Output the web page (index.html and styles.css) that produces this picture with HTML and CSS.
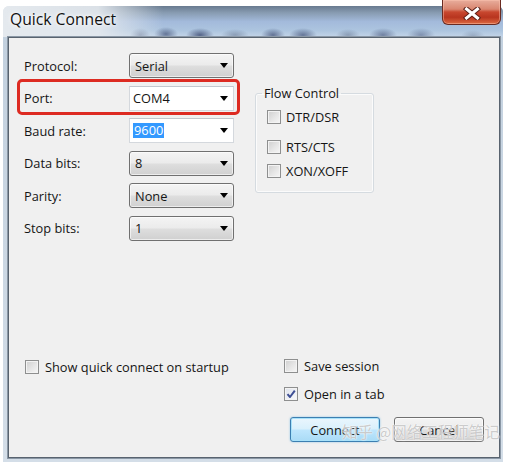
FILE: index.html
```html
<!DOCTYPE html>
<html>
<head>
<meta charset="utf-8">
<title>Quick Connect</title>
<link rel="stylesheet" href="styles.css">
</head>
<body>
<div class="window">
  <div class="titlebar">
    <span class="title">Quick Connect</span>
    <div class="close">
      <svg width="18" height="13" viewBox="0 0 18 13">
        <path d="M3.5 2 L14.5 11 M14.5 2 L3.5 11" stroke="#5b1f16" stroke-width="5" stroke-linecap="square" fill="none"/>
        <path d="M3.5 2 L14.5 11 M14.5 2 L3.5 11" stroke="#ffffff" stroke-width="3" stroke-linecap="square" fill="none"/>
      </svg>
    </div>
  </div>
  <div class="frame">
    <div class="panel">
      <div class="top">
        <div class="form">
          <div class="row">
            <span class="label">Protocol:</span>
            <div class="combo btn"><span>Serial</span><i class="arrow"></i></div>
          </div>
          <div class="row hl">
            <span class="label">Port:</span>
            <div class="combo edit"><span>COM4</span><i class="arrow"></i></div>
          </div>
          <div class="row">
            <span class="label">Baud rate:</span>
            <div class="combo edit"><span class="sel">9600</span><i class="arrow"></i></div>
          </div>
          <div class="row">
            <span class="label">Data bits:</span>
            <div class="combo btn"><span>8</span><i class="arrow"></i></div>
          </div>
          <div class="row">
            <span class="label">Parity:</span>
            <div class="combo btn"><span>None</span><i class="arrow"></i></div>
          </div>
          <div class="row">
            <span class="label">Stop bits:</span>
            <div class="combo btn"><span>1</span><i class="arrow"></i></div>
          </div>
        </div>
        <fieldset class="group">
          <legend>Flow Control</legend>
          <div class="check g1"><span class="box"></span><span>DTR/DSR</span></div>
          <div class="check g2"><span class="box"></span><span>RTS/CTS</span></div>
          <div class="check g3"><span class="box"></span><span>XON/XOFF</span></div>
        </fieldset>
      </div>
      <div class="bottom">
        <div class="left">
          <div class="check"><span class="box"></span><span>Show quick connect on startup</span></div>
        </div>
        <div class="right">
          <div class="check"><span class="box"></span><span>Save session</span></div>
          <div class="check"><span class="box checked">
            <svg width="12" height="12" viewBox="0 0 12 12"><path d="M2.5 6.2 L5 9 L9.8 2.6" stroke="#3e4f94" stroke-width="2" fill="none" stroke-linejoin="round"/></svg>
          </span><span>Open in a tab</span></div>
          <div class="buttons">
            <div class="button default">Connect</div>
            <div class="button">Cancel</div>
          </div>
        </div>
      </div>
      <div class="watermark">知乎 @网络工程师笔记</div>
    </div>
  </div>
</div>
</body>
</html>
```
FILE: styles.css
```css
* { box-sizing: border-box; }
html, body { margin: 0; padding: 0; background: #ffffff; }
body {
  font-family: "Open Sans", "Noto Sans", sans-serif;
  font-size: 12.8px;
  color: #151515;
}

.window {
  margin: 6px 0 0 3px;
  width: 500px;
  height: 456px;
  display: flex;
  flex-direction: column;
  border-radius: 6px 6px 0 0;
  background: linear-gradient(to right, #e3e9ee 0, #cdd8e3 40%, #c3d1df 100%);
}

.titlebar {
  height: 31px;
  flex: none;
  display: flex;
  align-items: flex-start;
  border-radius: 6px 6px 0 0;
  background:
    linear-gradient(to right, rgba(228,233,238,1) 0, rgba(228,233,238,.92) 95px, rgba(228,233,238,0) 160px),
    radial-gradient(ellipse 10px 7px at 137px 29px, rgba(60,74,110,.45), rgba(60,74,110,0)),
    radial-gradient(ellipse 12px 7px at 163px 28px, rgba(55,70,110,.65), rgba(55,70,110,0)),
    radial-gradient(ellipse 14px 7px at 197px 29px, rgba(50,64,105,.75), rgba(50,64,105,0)),
    radial-gradient(ellipse 14px 6px at 232px 29px, rgba(80,96,125,.45), rgba(80,96,125,0)),
    radial-gradient(ellipse 12px 7px at 270px 29px, rgba(50,64,105,.65), rgba(50,64,105,0)),
    radial-gradient(ellipse 14px 7px at 300px 29px, rgba(55,70,110,.65), rgba(55,70,110,0)),
    radial-gradient(ellipse 12px 6px at 345px 29px, rgba(80,96,125,.45), rgba(80,96,125,0)),
    radial-gradient(ellipse 14px 7px at 380px 29px, rgba(50,64,105,.55), rgba(50,64,105,0)),
    radial-gradient(ellipse 14px 7px at 418px 29px, rgba(55,70,110,.45), rgba(55,70,110,0)),
    radial-gradient(ellipse 12px 6px at 470px 30px, rgba(80,96,125,.35), rgba(80,96,125,0)),
    linear-gradient(to bottom, #687a8f 0%, #889cb2 22%, #a3badb 50%, #adc5df 80%, #c4d5e8 100%);
}

.title {
  padding: 2px 0 0 7px;
  font-size: 15.7px;
  color: #111;
  text-shadow: 0 0 6px #ffffff, 0 0 3px #ffffff;
}

.close {
  margin: -6px 2px 0 auto;
  width: 59px;
  height: 25px;
  display: flex;
  align-items: center;
  justify-content: center;
  padding-top: 2px;
  border: 1px solid #6a2b22;
  border-top: none;
  border-radius: 0 0 6px 6px;
  background: linear-gradient(to bottom, #e8ad9c 0%, #d98670 38%, #c8472f 50%, #b8351f 72%, #dd6a42 100%);
  box-shadow: inset 0 0 0 1px rgba(255,200,180,.45);
}

.frame {
  flex: 1;
  display: flex;
  padding: 0 3px 4px 5px;
  background: linear-gradient(to bottom, #c3d1df, #d4dee8);
}

.panel {
  flex: 1;
  position: relative;
  display: flex;
  flex-direction: column;
  background: #f0f0f0;
  border: 1px solid #58636f;
  box-shadow: 0 0 0 1px #8a97a5;
}

.top {
  display: flex;
  align-items: flex-start;
  padding: 15px 0 0 15px;
}

.form {
  display: flex;
  flex-direction: column;
  gap: 7.5px;
}

.row {
  display: flex;
  align-items: center;
  height: 25px;
  position: relative;
}

.label {
  width: 105px;
  color: #151515;
}

.row.hl::after {
  content: "";
  position: absolute;
  left: -7px;
  right: -6px;
  top: -7px;
  bottom: -4px;
  border: 3px solid #dd2b22;
  border-radius: 5px;
}

.combo {
  width: 105px;
  height: 25px;
  display: flex;
  align-items: center;
  padding-left: 5px;
}

.combo.btn {
  border: 1px solid #707070;
  border-radius: 3px;
  background: linear-gradient(to bottom, #f4f4f4 0%, #ebebeb 48%, #dedede 52%, #d0d0d0 100%);
  box-shadow: inset 0 0 0 1px rgba(255,255,255,.6);
}

.combo.edit {
  background: #ffffff;
  border: 1px solid #d4d8dd;
  border-top-color: #c2c7ce;
  padding-left: 3px;
}

.sel {
  background: #3399ff;
  color: #ffffff;
  padding: 0 1px;
  line-height: 15px;
}

.arrow {
  margin-left: auto;
  margin-right: 5px;
  width: 0;
  height: 0;
  border-left: 4px solid transparent;
  border-right: 4px solid transparent;
  border-top: 5px solid #000;
}

.group {
  margin: 32px 0 0 21px;
  width: 119px;
  padding: 0 0 13px 11px;
  border: 1px solid #d5dbe0;
  border-radius: 3px;
  box-shadow: inset 0 0 0 1px #fbfbfb;
}

.group legend {
  margin-left: -5px;
  padding: 0 2px;
  line-height: 17px;
  color: #151515;
}

.check {
  display: flex;
  align-items: center;
  height: 16px;
  gap: 6px;
}

.g1 { margin-top: 7px; gap: 5px; }
.g2 { margin-top: 14px; gap: 5px; }
.g3 { margin-top: 8px; gap: 5px; }

.box {
  width: 14px;
  height: 14px;
  flex: none;
  display: flex;
  align-items: center;
  justify-content: center;
  border: 1px solid #8e8f8f;
  background: linear-gradient(135deg, #cfcfcf 0%, #e6e6e6 55%, #f6f6f6 100%);
  box-shadow: inset 0 0 0 1px #f3f3f3;
}

.box.checked {
  background: linear-gradient(135deg, #dfe3ec 0%, #eef0f5 60%, #fafafa 100%);
}

.bottom {
  margin-top: auto;
  display: flex;
  padding: 0 0 15px 16px;
}

.bottom .left {
  width: 259px;
  padding-top: 1px;
}

.bottom .right {
  display: flex;
  flex-direction: column;
  gap: 12px;
}

.buttons {
  display: flex;
  gap: 14px;
  margin: 3px 0 0 6px;
}

.button {
  width: 90px;
  height: 25px;
  display: flex;
  align-items: center;
  justify-content: center;
  border: 1px solid #707070;
  border-radius: 3px;
  background: linear-gradient(to bottom, #f4f4f4 0%, #ebebeb 48%, #dedede 52%, #d0d0d0 100%);
  box-shadow: inset 0 0 0 1px rgba(255,255,255,.7);
  color: #151515;
}

.button.default {
  border-color: #3c7fb1;
  background: linear-gradient(to bottom, #eaf6fd 0%, #d9f0fc 48%, #bee6fd 52%, #a9dbf6 100%);
  box-shadow: inset 0 0 0 1px #a8e2fa, 0 0 2px rgba(60,160,220,.6);
}

.watermark {
  position: absolute;
  left: 333px;
  top: 383px;
  font-family: "Noto Sans CJK SC", sans-serif;
  font-size: 15.5px;
  line-height: 20px;
  color: rgba(160,160,160,.55);
  text-shadow: 0 0 2px rgba(255,255,255,.95), 0 0 1px rgba(255,255,255,.95);
  white-space: nowrap;
}
```
